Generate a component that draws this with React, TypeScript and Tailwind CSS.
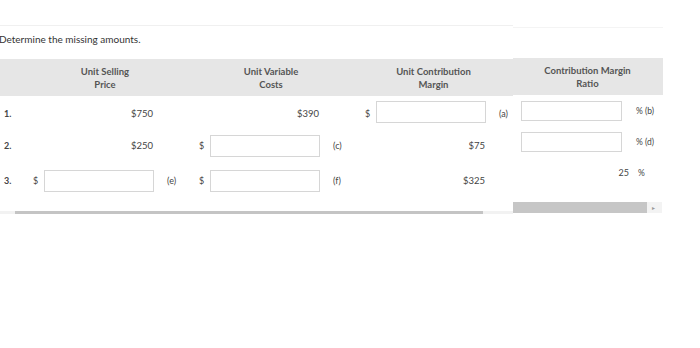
import React from "react";

const font = { fontFamily: "Lato, 'Open Sans', sans-serif" };

function Box({ w = "w-[110px]", h = "h-[22px]" }: { w?: string; h?: string }) {
  return <div className={`${w} ${h} shrink-0 border border-[#d6d6d6] bg-white`} />;
}

// one cell of the left table: optional "$" + input, or a right-aligned amount
function Cell({
  value,
  input,
  tag,
  w = "w-[166px]",
  low,
}: {
  value?: string;
  input?: boolean;
  tag?: string;
  w?: string;
  low?: boolean;
}) {
  const drop = low ? "pt-[5px]" : "";
  return (
    <div className={`${w} shrink-0 flex items-center pl-[11px]`}>
      <div className="w-[121px] shrink-0 flex items-center justify-end">
        {input ? (
          <>
            <span className={`w-[11px] text-[9px] ${drop}`}>$</span>
            <Box />
          </>
        ) : (
          <span className={`text-[9.5px] pr-[1px] ${drop}`}>{value}</span>
        )}
      </div>
      {tag && <span className={`ml-[13px] text-[9px] ${drop}`}>{tag}</span>}
    </div>
  );
}

function Head({ a, b, w = "w-[166px]" }: { a: string; b: string; w?: string }) {
  return (
    <div className={`${w} shrink-0 flex flex-col items-center justify-center font-bold text-[9.5px] leading-[13px] text-[#555]`}>
      <span>{a}</span>
      <span>{b}</span>
    </div>
  );
}

export default function App() {
  return (
    <div className="w-[700px] h-[348px] bg-white text-[#444] flex" style={font}>
      {/* main table */}
      <div className="w-[513px] shrink-0 flex flex-col">
        <div className="h-[26px] border-b border-[#f0f0f0]" />
        <div className="h-[33px] pt-[6px] text-[10px] text-[#333] -ml-[1px]">Determine the missing amounts.</div>
        <div className="h-[37px] bg-[#e6e6e6] flex">
          <div className="w-[22px] shrink-0" />
          <Head a="Unit Selling" b="Price" />
          <Head a="Unit Variable" b="Costs" />
          <Head a="Unit Contribution" b="Margin" w="w-[159px]" />
        </div>
        <div className="h-[33px] flex items-center mt-[-1px]">
          <span className="w-[22px] shrink-0 pl-[4px] pt-[5px] text-[9px] font-bold">1.</span>
          <Cell value="$750" low />
          <Cell value="$390" low />
          <Cell input tag="(a)" w="w-[159px]" low />
        </div>
        <div className="h-[36px] flex items-center">
          <span className="w-[22px] shrink-0 pl-[4px] text-[9px] font-bold">2.</span>
          <Cell value="$250" />
          <Cell input tag="(c)" />
          <Cell value="$75" w="w-[159px]" />
        </div>
        <div className="h-[34px] flex items-center">
          <span className="w-[22px] shrink-0 pl-[4px] text-[9px] font-bold">3.</span>
          <Cell input tag="(e)" />
          <Cell input tag="(f)" />
          <Cell value="$325" w="w-[159px]" />
        </div>
        <div className="mt-[13px] h-[3px] bg-[#f2f2f2] flex">
          <div className="ml-[15px] w-[468px] bg-[#c4c4c4]" />
        </div>
      </div>

      {/* ratio column */}
      <div className="w-[150px] shrink-0 flex flex-col">
        <div className="h-[28px] border-b border-[#f4f4f4]" />
        <div className="h-[30px]" />
        <div className="h-[37px] bg-[#e6e6e6] flex">
          <Head a="Contribution Margin" b="Ratio" w="w-[149px]" />
        </div>
        <div className="h-[30px] flex items-center mt-[1px]">
          <div className="ml-[8px]">
            <Box w="w-[101px]" h="h-[20px]" />
          </div>
          <span className="ml-[14px] text-[8.5px]">% (b)</span>
        </div>
        <div className="h-[32px] flex items-center">
          <div className="ml-[8px]">
            <Box w="w-[101px]" h="h-[20px]" />
          </div>
          <span className="ml-[14px] text-[8.5px]">% (d)</span>
        </div>
        <div className="h-[30px] flex items-center">
          <span className="w-[116px] text-right text-[9px]">25</span>
          <span className="ml-[9px] text-[8.5px]">%</span>
        </div>
        <div className="mt-[14px] h-[11px] w-[149px] bg-[#f3f3f3] flex items-center">
          <div className="w-[134px] h-full bg-[#c6c6c6]" />
          <span className="ml-[5px] text-[6px] text-[#999]">▸</span>
        </div>
      </div>
    </div>
  );
}
